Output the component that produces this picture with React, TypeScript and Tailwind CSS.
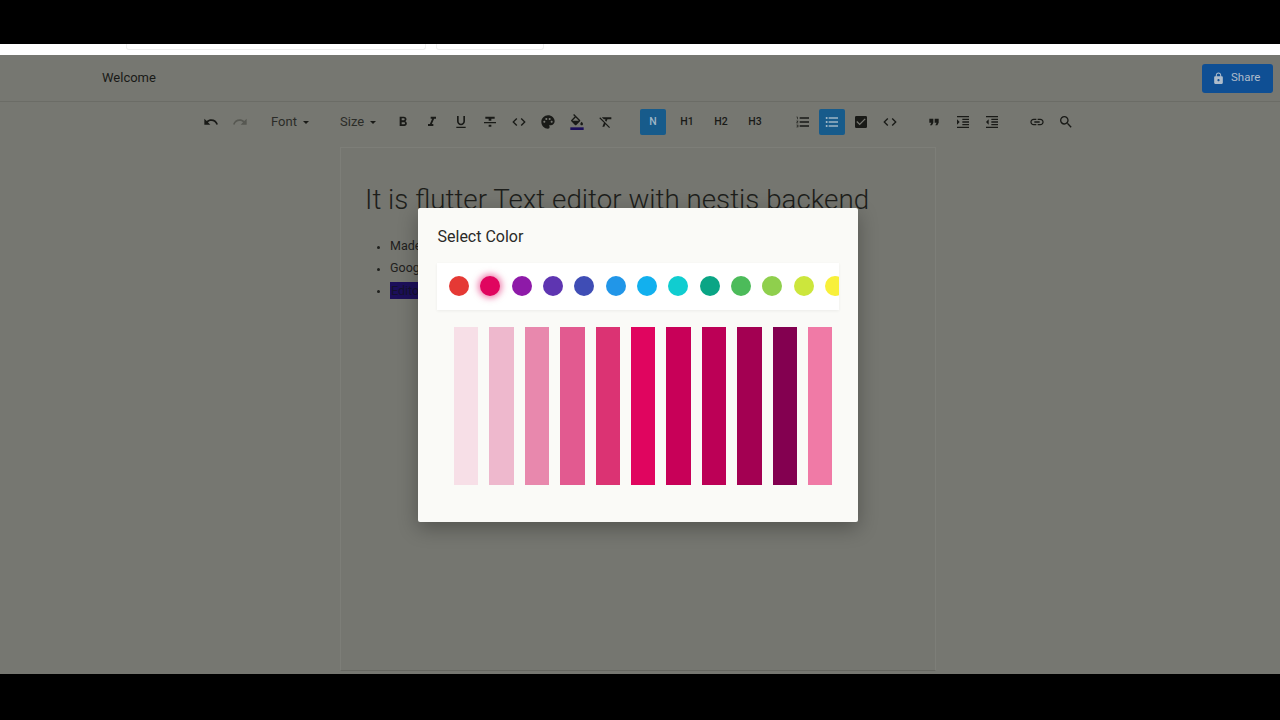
import React from 'react';
import {
  MdCheckBox,
  MdCode,
  MdFormatBold,
  MdFormatClear,
  MdFormatIndentDecrease,
  MdFormatIndentIncrease,
  MdFormatItalic,
  MdFormatListBulleted,
  MdFormatListNumbered,
  MdFormatQuote,
  MdFormatStrikethrough,
  MdFormatUnderlined,
  MdLink,
  MdLock,
  MdPalette,
  MdRedo,
  MdSearch,
  MdUndo,
} from 'react-icons/md';

const ACCENTS = [
  '#e53935', '#e0055f', '#8e1aa8', '#5e35b1', '#3f4db5', '#2196e8', '#12b0ee',
  '#10cdd0', '#0aa585', '#4cbb5a', '#8fcf4d', '#cce63c', '#f8f03a',
];

const SHADES = [
  '#f7dfe7', '#eeb8cd', '#e888ad', '#e25a90', '#db3373', '#e0055f',
  '#c80058', '#bc0056', '#a30052', '#830050', '#f07aa6',
];

const IconBtn: React.FC<{ children: React.ReactNode }> = ({ children }) => (
  <div className="flex h-[26px] w-[29px] items-center justify-center text-[#191a17]">{children}</div>
);

const Caret = () => (
  <span className="ml-[6px] mt-[1px] h-0 w-0 border-x-[3px] border-t-[3px] border-x-transparent border-t-[#191a17]" />
);

const FillIcon = () => (
  <svg width="16" height="16" viewBox="0 0 24 24" fill="#191a17">
    <path d="M16.56 8.94 7.62 0 6.21 1.41l2.38 2.38-5.15 5.15c-.59.59-.59 1.54 0 2.12l5.5 5.5c.29.29.68.44 1.06.44s.77-.15 1.06-.44l5.5-5.5c.59-.58.59-1.53 0-2.12zM5.21 10 10 5.21 14.79 10H5.21zM19 11.5s-2 2.17-2 3.5c0 1.1.9 2 2 2s2-.9 2-2c0-1.33-2-3.5-2-3.5z" />
    <rect x="2" y="20" width="20" height="4" fill="#1c0f5a" />
  </svg>
);

const HeadingBtn: React.FC<{ label: string; active?: boolean }> = ({ label, active }) => (
  <div className="flex h-[26px] w-[34px] items-center justify-center">
    <div
      className={
        active
          ? 'flex h-[26px] w-[26px] items-center justify-center rounded-[2px] bg-[#175b8b] text-[#9fb6c6]'
          : 'flex h-[26px] w-[26px] items-center justify-center text-[#191a17]'
      }
    >
      <span className="text-[10.5px] font-medium leading-none">{label}</span>
    </div>
  </div>
);

const Toolbar = () => (
  <div className="flex h-[42px] items-start pl-[196px] pt-[7px]">
    <IconBtn><MdUndo size={16} /></IconBtn>
    <div className="flex h-[26px] w-[29px] items-center justify-center text-[#575852]"><MdRedo size={16} /></div>
    <div className="ml-[17px] flex h-[26px] w-[69px] items-center text-[13px] text-[#2b2c28]">
      Font
      <Caret />
    </div>
    <div className="flex h-[26px] w-[48px] items-center text-[13px] text-[#2b2c28]">
      Size
      <Caret />
    </div>
    <IconBtn><MdFormatBold size={16} /></IconBtn>
    <IconBtn><MdFormatItalic size={16} /></IconBtn>
    <IconBtn><MdFormatUnderlined size={16} /></IconBtn>
    <IconBtn><MdFormatStrikethrough size={16} /></IconBtn>
    <IconBtn><MdCode size={16} /></IconBtn>
    <IconBtn><MdPalette size={16} /></IconBtn>
    <IconBtn><FillIcon /></IconBtn>
    <IconBtn><MdFormatClear size={16} /></IconBtn>
    <div className="ml-[16px] flex">
      <HeadingBtn label="N" active />
      <HeadingBtn label="H1" />
      <HeadingBtn label="H2" />
      <HeadingBtn label="H3" />
    </div>
    <div className="ml-[16px] flex">
      <IconBtn><MdFormatListNumbered size={16} /></IconBtn>
      <div className="flex h-[26px] w-[29px] items-center justify-center">
        <div className="flex h-[26px] w-[26px] items-center justify-center rounded-[2px] bg-[#175b8b] text-[#9fb6c6]">
          <MdFormatListBulleted size={16} />
        </div>
      </div>
      <IconBtn><MdCheckBox size={16} /></IconBtn>
      <IconBtn><MdCode size={16} /></IconBtn>
    </div>
    <div className="ml-[15px] flex">
      <IconBtn><MdFormatQuote size={16} /></IconBtn>
      <IconBtn><MdFormatIndentIncrease size={16} /></IconBtn>
      <IconBtn><MdFormatIndentDecrease size={16} /></IconBtn>
    </div>
    <div className="ml-[16px] flex">
      <IconBtn><MdLink size={16} /></IconBtn>
      <IconBtn><MdSearch size={16} /></IconBtn>
    </div>
  </div>
);

const ColorDialog = () => (
  <div className="absolute left-[418px] top-[153px] h-[314px] w-[440px] rounded-[2px] bg-[#fafaf7] pl-[19px] pt-[18px] shadow-[0_6px_20px_rgba(0,0,0,0.3)]">
    <div className="pl-[0.5px] text-[16px] leading-[22px] text-[#2a2a28]">Select Color</div>
    <div className="mt-[15px] flex h-[47px] w-[402px] items-center gap-[11.35px] overflow-hidden bg-white pb-[1px] pl-[12px] shadow-[0_1px_3px_rgba(0,0,0,0.06)]">
      {ACCENTS.map((c, i) => (
        <div
          key={c}
          className={
            i === 1
              ? 'h-5 w-5 shrink-0 rounded-full shadow-[0_0_6px_2px_rgba(224,5,95,0.5)]'
              : 'h-5 w-5 shrink-0 rounded-full'
          }
          style={{ backgroundColor: c }}
        />
      ))}
    </div>
    <div className="ml-[17px] mt-[17px] flex gap-[11px]">
      {SHADES.map((c) => (
        <div key={c} className="h-[158px] w-[24.4px] shrink-0" style={{ backgroundColor: c }} />
      ))}
    </div>
  </div>
);

export default function App() {
  return (
    <div className="flex h-[720px] w-[1280px] flex-col overflow-hidden bg-black font-['Roboto',sans-serif]">
      <div className="h-[44px] shrink-0 bg-black" />

      {/* browser chrome, mostly cut off by the black bar */}
      <div className="flex h-[11px] shrink-0 items-start bg-white pl-[126px]">
        <div className="h-[6px] w-[300px] rounded-b-[3px] border-x border-b border-[#eeeeee]" />
        <div className="ml-[10px] h-[6px] w-[108px] rounded-b-[3px] border-x border-b border-[#eeeeee]" />
      </div>

      <div className="relative flex h-[619px] shrink-0 flex-col bg-[#767771]">
        <header className="flex h-[47px] shrink-0 items-center justify-between border-b border-[#6b6c66] pl-[102px] pr-[7px]">
          <span className="text-[13px] text-[#191a17]">Welcome</span>
          <div className="flex h-[29px] w-[71px] items-center gap-[6px] rounded-[3px] bg-[#0f4f94] pl-[10px] text-[#aebccb]">
            <MdLock size={13} />
            <span className="text-[11.5px]">Share</span>
          </div>
        </header>

        <Toolbar />

        <div className="flex justify-center pr-[4px] pt-[3px]">
          <div className="h-[524px] w-[596px] border border-[#7d7e78] border-b-[#666761] bg-[#757670] px-[24px] pt-[33px]">
            <h1 className="whitespace-nowrap text-[27.75px] font-light leading-[38px] text-[#1d1e1b]">
              It is flutter Text editor with nestis backend
            </h1>
            <ul className="mt-[16px] flex list-disc flex-col pl-[25px] text-[12.5px] leading-[22px] text-[#1f201d] marker:text-[11px]">
              <li>Made</li>
              <li>Google</li>
              <li>
                <span className="inline-block h-[17px] bg-[#1c0f5a] px-[1px] align-middle leading-[17px] text-[#14122e]">Editor</span>
              </li>
            </ul>
          </div>
        </div>

        <ColorDialog />
      </div>

      <div className="flex-1 bg-black" />
    </div>
  );
}
